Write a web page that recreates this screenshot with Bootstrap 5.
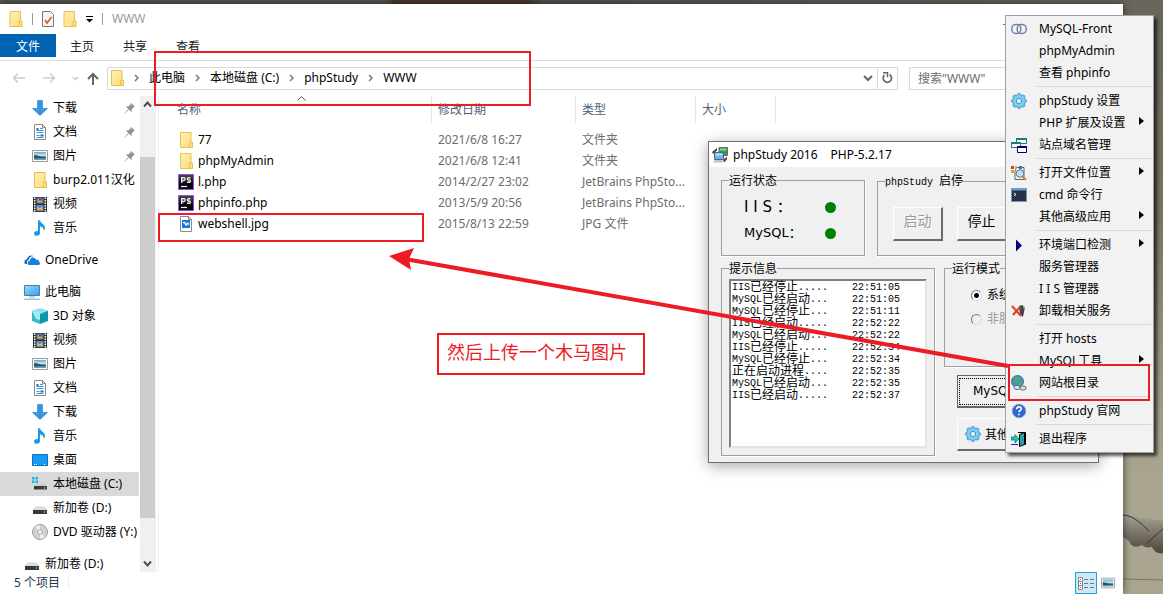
<!DOCTYPE html>
<html lang="zh-CN">
<head>
<meta charset="utf-8">
<meta name="viewport" content="width=device-width, initial-scale=1">
<title>WWW</title>
<link href="https://cdn.jsdelivr.net/npm/bootstrap@5.3.0/dist/css/bootstrap.min.css" rel="stylesheet">
<style>
  :root { --mark: #ed1c24; --ui: "Noto Sans", "Noto Sans CJK SC", sans-serif; }
  body { font: 12px/16px var(--ui); color: #000; background: #6b6a60; }
  button { font: inherit; color: inherit; background: none; border: 0; padding: 0; }
  a { color: inherit; text-decoration: none; }
  svg { display: block; flex: none; }
  .desktop { padding: 4px 40px 0 0; background: #545850; }
  .wallpaper { top: 0; right: 0; width: 40px; height: 100%; }
  .topstrip { top: 0; left: 0; width: 100%; height: 4px; background: linear-gradient(90deg, #565952 0 33%, #4b3a30 34% 45%, #54574f 47%, #6b6a60); }

  /* explorer */
  .explorer { background: #fff; box-shadow: 0 0 8px rgba(0,0,0,.6); }
  .titlebar, .ribbon, .addressrow, .statusbar { flex: none; }
  .titlebar { height: 30px; color: #999; padding-left: 9px; gap: 9px; }
  .vline { width: 1px; height: 12px; background: #999; }
  .winbtns { gap: 35px; padding: 10px 17px 0 0; }
  .ribbon { height: 27px; border-bottom: 1px solid #dadbdc; color: #222; gap: 29px; }
  .ribbon button { height: 23px; padding-top: 2px; }
  .ribbon .file-tab { width: 56px; background: #0063b1; color: #fff; margin-right: -15px; }
  .addressrow { height: 34px; padding: 0 6px 0 12px; margin-bottom: 1px; }
  .pathbox, .searchbox { height: 23px; border: 1px solid #d9d9d9; }
  .crumbs { gap: 10px; padding-left: 3px; }
  .refresh { width: 20px; height: 21px; border-left: 1px solid #d9d9d9; }
  .searchbox { width: 208px; color: #6d6d6d; padding: 0 8px; font: inherit; border-radius: 0; margin-left: 11px; }
  .searchbox::placeholder { color: #6d6d6d; opacity: 1; }
  .side { width: 140px; }
  .side a { height: 24px; padding-left: 32px; gap: 5px; white-space: nowrap; flex: none; margin-right: 1px; overflow: hidden; }
  .side a.top-level { padding-left: 24px; }
  .side a.spaced { margin-top: 8px; }
  .side a.current { background: #d9d9d9; }
  .side .pin { margin-left: auto; margin-right: 3px; }
  .side .pinned-name { width: 84px; overflow: hidden; }
  .scroller { width: 16px; background: #f0f0f0; }
  .scroller button { height: 17px; width: 14px; }
  .thumb { width: 15px; margin: 44px 0 37px; background: #cdcdcd; flex: 1; }
  .files { border-left: 1px solid #f0f0f0; margin-left: 2px; }
  .filelist { table-layout: fixed; width: 617px; color: #6d6d6d; border-collapse: separate; border-spacing: 0; }
  .filelist th { height: 27px; border-right: 1px solid #e5e5e5; font-weight: 400; color: #4c607a; padding: 0 6px; }
  .filelist td { height: 21px; padding: 0 6px; white-space: nowrap; }
  .filelist th:first-child, .filelist td:first-child { padding-left: 18px; }
  .filelist td:first-child { padding-left: 19px; }
  .filelist tbody::before { content: ""; display: block; height: 6px; }
  .filelist .fname { color: #000; gap: 4px; }
  .sortmark { top: -4px; left: 138px; }
  .statusbar { height: 22px; color: #26354f; padding: 0 8px 0 14px; }
  .viewbtn { width: 22px; height: 22px; }
  .viewbtn.on { border: 1px solid #26a0da; background: #cbe8f6; }

  /* phpStudy window */
  .study { left: 708px; top: 141px; width: 391px; height: 322px; background: #f0f0f0; border: 1px solid #707070; box-shadow: 0 3px 14px rgba(0,0,0,.35); }
  .study-title { height: 25px; background: #fff; padding-left: 3px; gap: 5px; }
  .study-body { padding: 7px 12px 6px; gap: 6px; }
  .group { border: 1px solid #a0a0a0; box-shadow: 1px 0 #fff, 0 1px #fff; padding: 0 7px; }
  .group legend { float: none; width: auto; font: 12px/12px "Noto Sans CJK SC", sans-serif; margin: 0; background: #f0f0f0; }
  .group .song { font-family: "Liberation Mono", "Noto Sans CJK SC", monospace; font-size: 10px; }
  .g-status { width: 144px; height: 82px; }
  .g-info { width: 214px; height: 194px; }
  .g-mode { height: 105px; }
  .state { font: 13px/26px "DejaVu Sans", "Noto Sans CJK SC", sans-serif; padding: 0 21px 0 15px; }
  .state .wide { font-size: 15px; word-break: keep-all; }
  .lamp { width: 11px; height: 11px; border-radius: 50%; background: #008000; }
  .raised { background: #f0f0f0; border: solid; border-width: 1px 2px 2px 1px; border-color: #fff #6a6a6a #6a6a6a #fff; white-space: nowrap; font-family: "Noto Sans CJK SC", sans-serif; }
  .sq { width: 50px; height: 34px; font-size: 14px; padding-bottom: 8px; }
  .sq:disabled { color: #9a9a9a; text-shadow: 1px 1px #fff; }
  .long { height: 33px; width: 128px; margin-left: 13px; }
  .long.focused { border: 1px solid #646464; border-right-width: 2px; border-bottom-width: 2px; padding-left: 2px; font-family: "DejaVu Sans", "Noto Sans CJK SC", sans-serif; }
  .focused span { display: block; outline: 1px dotted #000; height: 25px; line-height: 25px; padding-left: 13px; margin-right: 3px; text-align: left; }
  .log { height: 169px; background: #fff; border: 2px solid; border-color: #808080 #e3e3e3 #e3e3e3 #808080; margin: 5px 0 0; padding: 1px 0 0 1px; list-style: none; white-space: pre; font: 10px/12px "Liberation Mono", "Noto Sans CJK SC", monospace; }
  .log li { height: 12px; }
  .log span { font-size: 12px; line-height: 12px; vertical-align: top; }
  .mode { gap: 5px; height: 24px; padding-left: 19px; white-space: nowrap; }
  .mode input { appearance: none; width: 11px; height: 11px; margin: 0; border-radius: 50%; border: 1px solid #777; border-right-color: #ddd; border-bottom-color: #ddd; background: #fff; }
  .mode input:checked { background: radial-gradient(circle, #000 0 2px, #fff 3px); }
  .mode.off { color: #9a9a9a; }
  .mode.off input { background: #f0f0f0; }

  /* tray menu */
  .traymenu { left: 1005px; top: 15px; width: 149px; background: #f2f2f2; border: 1px solid #a0a0a0; padding: 2px; margin: 0; list-style: none; box-shadow: 3px 3px 3px rgba(0,0,0,.65); white-space: nowrap; }
  .traymenu button { height: 22px; width: 100%; gap: 12px; text-align: left; }
  .traymenu .slot { width: 16px; margin-left: 3px; flex: none; }
  .traymenu .more { margin: 0 7px 4px auto; width: 5px; height: 8px; background: #000; clip-path: polygon(0 0, 100% 50%, 0 100%); }
  .traymenu .rule { height: 4px; margin: 2px 0 0 29px; border-top: 1px solid #d7d7d7; }

  /* annotations */
  .markbox { border: 2px solid var(--mark); pointer-events: none; }
  .m-path { left: 154px; top: 51px; width: 377px; height: 55px; }
  .m-file { left: 158px; top: 213px; width: 266px; height: 29px; }
  .m-note { left: 437px; top: 333px; width: 208px; height: 42px; color: var(--mark); font: 18px/34px var(--ui); padding-left: 8px; }
  .m-root { left: 1008px; top: 364px; width: 142px; height: 37px; }
  .m-arrow { left: 380px; top: 240px; pointer-events: none; }
</style>
</head>
<body>
<svg width="0" height="0" class="position-absolute" aria-hidden="true">
  <defs>
    <linearGradient id="gf" x2="1" y2="1"><stop stop-color="#fff0b5"/><stop offset="1" stop-color="#ffdc7a"/></linearGradient>
    <linearGradient id="gs" x2="0" y2="1"><stop stop-color="#5fa9dc"/><stop offset=".45" stop-color="#cfe6f2"/><stop offset=".6" stop-color="#39738a"/><stop offset="1" stop-color="#7ba5c4"/></linearGradient>
    <linearGradient id="gm" x2="1" y2="1"><stop stop-color="#9bdcff"/><stop offset="1" stop-color="#2a9df4"/></linearGradient>
    <linearGradient id="gp" x2="0" y2="1"><stop stop-color="#4a4a4a"/><stop offset=".6" stop-color="#080808"/></linearGradient>
    <symbol id="folder" viewBox="0 0 16 16"><path d="M2.500.5h10.500v9.500h1.500v5.500H2.500z" fill="url(#gf)" stroke="#e6c24a"/><path d="M11.500 15v-4.500h1.500v-1" fill="none" stroke="#e6c24a"/></symbol>
    <symbol id="down" viewBox="0 0 16 16"><path d="M5.500.5h5v8h5L8 15.500.500 8.500h5z" fill="#3a94e4" stroke="#2b79c5" stroke-width=".6"/></symbol>
    <symbol id="doc" viewBox="0 0 16 16"><path d="M2.500.5h8l3 3v12h-11z" fill="#fff" stroke="#8a8a8a"/><path d="M10.500.5v3h3" fill="none" stroke="#8a8a8a"/><path d="M8 4.500h3M4.500 6.500h7M4.500 8.500h7M4.500 11.500h3M4.500 13.500h7" stroke="#2f9be0"/><path d="M4.500 5h2M8.500 11.500h3" stroke="#34689b" stroke-width="2"/></symbol>
    <symbol id="pic" viewBox="0 0 16 16"><path d="M.5 2.500h15v11H.5z" fill="#fff" stroke="#9a9a9a"/><path d="M2 4h12v8H2z" fill="url(#gs)"/><path d="M2 7c4 0 7 2 9 2l3 .5V10L2 10.500z" fill="#2a5d55"/></symbol>
    <symbol id="film" viewBox="0 0 16 16"><path d="M1 1h14v15H1z" fill="#333"/><path d="M4.500 1.500h7v6h-7z" fill="#3b76c9"/><path d="M4.500 9h7v6h-7z" fill="#4b8fe0"/><path d="M6 3l3 1 2 2-3 1-3-1z" fill="#e2a52a"/><path d="M7 2.500h2v2H7z" fill="#cf3030"/><path d="M5 10l2 2 3-1 1 3H5z" fill="#e6b64b"/><path d="M2.700 1.500v14M13.300 1.500v14" stroke="#fff" stroke-width="1.400" stroke-dasharray="1.500 1"/></symbol>
    <symbol id="note" viewBox="0 0 16 16"><path d="M6 .3h2c.3 2.900 5 4.200 5 7.400 0 1.300-.6 2.300-1.200 2.900.2-2-1.300-3.700-3.800-4.400V13c0 1.700-1.400 2.800-3.200 2.800S2 14.900 2 13.500 3.300 11 4.800 11c.5 0 .9 0 1.200.2z" fill="#1a9be6"/></symbol>
    <symbol id="pin" viewBox="0 0 12 12"><path d="M7 .8L11 5l-1.200.2-2 2.200-.3 2.600L5 7.500 1 11.200.6 11 4.300 7 1.800 4.500l2.700-.3 2.200-2z" fill="#8895a3"/></symbol>
    <symbol id="cloud" viewBox="0 0 16 16"><path d="M1 12C-.5 9.500 1 7.500 3 7.300 3.500 4.500 6.500 2.500 10 4.300c-3-.5-5 1.500-5.200 3.500C3 8.500 2.500 10.500 3.200 12z" fill="#0f6cc4"/><path d="M4.500 13c-1.500-1-1-4 1.300-4.200C6 5.500 10 4 12.200 7.800 14.500 7.500 15.500 9 15 10c1.500.5 1.300 3-.3 3z" fill="#1580dd"/></symbol>
    <symbol id="pc" viewBox="0 0 16 16"><path d="M.5 1.500h15v10H.5z" fill="url(#gm)" stroke="#4b7f9e"/><path d="M5 13h6" stroke="#8ca9b5"/><path d="M0 15.200h16" stroke="#76a5c4"/></symbol>
    <symbol id="cube" viewBox="0 0 16 16"><path d="M8 0l8 2.800L8 6 0 2.800z" fill="#8ce5ec"/><path d="M0 2.800L8 6v10l-8-3z" fill="#32bccb"/><path d="M16 2.800L8 6v10l8-3z" fill="#0b98ab"/><path d="M0 2.800L8 4v8l-4-1z" fill="#a5ecf1"/></symbol>
    <symbol id="desk" viewBox="0 0 16 16"><path d="M.5 2.500h15v11H.5z" fill="#1a9bf5" stroke="#0e6fb8"/><path d="M2 12.500h12" stroke="#fff" stroke-dasharray="1 1 1 7"/></symbol>
    <symbol id="disk" viewBox="0 0 16 16"><path d="M3.500 6.500h9L15 10H1z" fill="#dcdcdc"/><path d="M1 10h14v4H1z" fill="#3a3a3a"/><path d="M11.500 12h2" stroke="#7fe07f"/></symbol>
    <symbol id="sysdisk" viewBox="0 0 16 16"><path d="M0 1h2.500v2.500H0zM3.500 1H6v2.500H3.500zM0 4.500h2.500V7H0zM3.500 4.500H6V7H3.500z" fill="#19b4f0"/><path d="M4.500 7h8L15 10H2z" fill="#cfcfcf"/><path d="M2 10h13v3.500H2z" fill="#3a3a3a"/><path d="M11.500 12h2" stroke="#7fe07f"/></symbol>
    <symbol id="dvd" viewBox="0 0 16 16"><circle cx="8" cy="8" r="7.500" fill="#cfd1d2" stroke="#9c9c9c"/><path d="M8 8L3 2.500 8 1zM8 8l5 5.500L8 15z" fill="#eee"/><circle cx="8" cy="8" r="2.300" fill="#f6f6f6" stroke="#aaa"/></symbol>
    <symbol id="ps" viewBox="0 0 16 16"><path d="M.5.5h15v15H.5z" fill="url(#gp)" stroke="#9450e8"/><path d="M3.700 9V3.700H6c1.500 0 1.500 2.800 0 2.800H4M12.500 3.700h-2c-1.500 0-1.500 2.300 0 2.300h.7c1.500 0 1.500 2.300 0 2.300H9" fill="none" stroke="#e6e6e6" stroke-width="1.400"/><path d="M3 12.500h6" stroke="#fff" stroke-width="1.200"/></symbol>
    <symbol id="jpg" viewBox="0 0 16 16"><path d="M2.500.5h8l3 3v12h-11z" fill="#fff" stroke="#8a8a8a"/><path d="M10.500.5v3h3" fill="none" stroke="#8a8a8a"/><path d="M4 4h8v8H4z" fill="#0f7ad8"/><path d="M5 6.500h1.500L8 9l1.500-2L11 8.500" fill="none" stroke="#fff" stroke-width="1.300"/></symbol>
    <symbol id="chev" viewBox="0 0 5 8"><path d="M1 1l3 3-3 3" fill="none" stroke="#777" stroke-width="1.500"/></symbol>
    <symbol id="gear" viewBox="0 0 16 16"><g fill="#6fc4f0" stroke="#3593cd" stroke-width=".8"><circle cx="8" cy="2.500" r="2"/><circle cx="12" cy="4" r="2"/><circle cx="13.500" cy="8" r="2"/><circle cx="12" cy="12" r="2"/><circle cx="8" cy="13.500" r="2"/><circle cx="4" cy="12" r="2"/><circle cx="2.500" cy="8" r="2"/><circle cx="4" cy="4" r="2"/></g><circle cx="8" cy="8" r="5.500" fill="#7fcdf5"/><circle cx="8" cy="8" r="2.600" fill="#f4f9fc" stroke="#3b94ca"/></symbol>
  </defs>
</svg>

<main class="desktop vh-100 position-relative overflow-hidden d-flex flex-column">
  <div class="topstrip position-absolute"></div>
  <svg class="wallpaper position-absolute" viewBox="0 0 40 594" preserveAspectRatio="none" aria-hidden="true">
    <defs><linearGradient id="wp" x2="0" y2="1"><stop stop-color="#68665c"/><stop offset=".35" stop-color="#76725f"/><stop offset=".55" stop-color="#908c78"/><stop offset=".8" stop-color="#a9a590"/><stop offset="1" stop-color="#aaa590"/></linearGradient>
    <linearGradient id="br" x2="0" y2="1"><stop stop-color="#aaa69a"/><stop offset="1" stop-color="#4d4438"/></linearGradient></defs>
    <path d="M0 0h40v594H0z" fill="url(#wp)"/>
    <path d="M0 513l20 5 20 3v32c-6 1-9-2-11-6-5 1-8 0-10-2-7 4-12 0-13-4l-6-4z" fill="url(#br)"/>
    <path d="M0 515c10 0 20 10 26 16M24 543l16-14" stroke="#38332b" fill="none"/>
    <path d="M0 579l40 1" stroke="#7c7868"/>
  </svg>

  <section class="explorer position-relative flex-grow-1 d-flex flex-column" style="min-height:0">
    <header class="titlebar d-flex align-items-center">
      <svg width="14" height="16" viewBox="2 0 13 16"><use href="#folder" width="16" height="16"/></svg>
      <span class="vline"></span>
      <svg width="12" height="16" viewBox="0 0 12 16"><path d="M.5.5h8l3 3v12H.5z" fill="#f6f6f6" stroke="#777"/><path d="M3 9l2 3 4.500-6" fill="none" stroke="#e2571e" stroke-width="1.600"/></svg>
      <svg width="14" height="16" viewBox="2 0 13 16"><use href="#folder" width="16" height="16"/></svg>
      <svg width="7" height="7" viewBox="0 0 7 7"><path d="M0 .5h7" stroke="#000"/><path d="M0 3h7L3.500 6.500z"/></svg>
      <span class="vline"></span>
      <span>WWW</span>
      <div class="winbtns ms-auto d-flex">
        <button aria-label="最小化"><svg width="11" height="11"><path d="M0 5.500h11" stroke="#777"/></svg></button>
        <button aria-label="最大化"><svg width="11" height="11"><path d="M.5.500h10v10H.500z" fill="none" stroke="#777"/></svg></button>
        <button aria-label="关闭"><svg width="11" height="11"><path d="M.5.500l10 10M10.500.500l-10 10" stroke="#777"/></svg></button>
      </div>
    </header>
    <nav class="ribbon d-flex">
      <button class="file-tab">文件</button><button>主页</button><button>共享</button><button>查看</button>
    </nav>
    <div class="addressrow d-flex align-items-center">
      <button aria-label="后退"><svg width="14" height="12" viewBox="0 0 14 12"><path d="M13 6H2M6 1.500L1.500 6 6 10.500" fill="none" stroke="#ccc" stroke-width="1.500"/></svg></button>
      <button class="ms-3" aria-label="前进"><svg width="14" height="12" viewBox="0 0 14 12"><path d="M1 6h11M8 1.500L12.500 6 8 10.500" fill="none" stroke="#ccc" stroke-width="1.500"/></svg></button>
      <button class="ms-3 me-2" aria-label="最近"><svg width="7" height="5"><path d="M1 1l2.500 2.500L6 1" fill="none" stroke="#ccc" stroke-width="1.500"/></svg></button>
      <button class="me-2" aria-label="上移"><svg width="12" height="13"><path d="M6 13V2M1 7l5-5 5 5" fill="none" stroke="#666" stroke-width="2"/></svg></button>
      <div class="pathbox flex-grow-1 d-flex align-items-center">
        <nav class="crumbs flex-grow-1 d-flex align-items-center">
          <svg width="13" height="16" viewBox="2 0 13 16"><use href="#folder" width="16" height="16"/></svg>
          <svg width="5" height="8"><use href="#chev"/></svg><a href="#">此电脑</a>
          <svg width="5" height="8"><use href="#chev"/></svg><a href="#">本地磁盘 (C:)</a>
          <svg width="5" height="8"><use href="#chev"/></svg><a href="#">phpStudy</a>
          <svg width="5" height="8"><use href="#chev"/></svg><a href="#">WWW</a>
        </nav>
        <button class="me-1" aria-label="历史记录"><svg width="10" height="7"><path d="M1 1l4 4 4-4" fill="none" stroke="#666" stroke-width="2"/></svg></button>
        <button class="refresh d-flex align-items-center justify-content-center" aria-label="刷新"><svg width="11" height="12" viewBox="0 0 11 12"><path d="M7.500 2.500A4.200 4.200 0 1 1 2.500 3" fill="none" stroke="#666" stroke-width="1.700"/><path d="M1 .8h4.500v4.500" fill="none" stroke="#666" stroke-width="1.500"/></svg></button>
      </div>
      <input class="searchbox" type="search" placeholder='搜索"WWW"' aria-label="搜索">
    </div>
    <div class="d-flex flex-grow-1" style="min-height:0">
      <nav class="side d-flex flex-column overflow-hidden flex-shrink-0">
        <a href="#" class="d-flex align-items-center"><svg width="16" height="16"><use href="#down"/></svg>下载<svg class="pin" width="12" height="12"><use href="#pin"/></svg></a>
        <a href="#" class="d-flex align-items-center"><svg width="16" height="16"><use href="#doc"/></svg>文档<svg class="pin" width="12" height="12"><use href="#pin"/></svg></a>
        <a href="#" class="d-flex align-items-center"><svg width="16" height="16"><use href="#pic"/></svg>图片<svg class="pin" width="12" height="12"><use href="#pin"/></svg></a>
        <a href="#" class="d-flex align-items-center"><svg width="16" height="16"><use href="#folder"/></svg><span class="pinned-name">burp2.011汉化</span></a>
        <a href="#" class="d-flex align-items-center"><svg width="16" height="16"><use href="#film"/></svg>视频</a>
        <a href="#" class="d-flex align-items-center"><svg width="16" height="16"><use href="#note"/></svg>音乐</a>
        <a href="#" class="d-flex align-items-center top-level spaced"><svg width="16" height="16"><use href="#cloud"/></svg>OneDrive</a>
        <a href="#" class="d-flex align-items-center top-level spaced"><svg width="16" height="16"><use href="#pc"/></svg>此电脑</a>
        <a href="#" class="d-flex align-items-center"><svg width="16" height="16"><use href="#cube"/></svg>3D 对象</a>
        <a href="#" class="d-flex align-items-center"><svg width="16" height="16"><use href="#film"/></svg>视频</a>
        <a href="#" class="d-flex align-items-center"><svg width="16" height="16"><use href="#pic"/></svg>图片</a>
        <a href="#" class="d-flex align-items-center"><svg width="16" height="16"><use href="#doc"/></svg>文档</a>
        <a href="#" class="d-flex align-items-center"><svg width="16" height="16"><use href="#down"/></svg>下载</a>
        <a href="#" class="d-flex align-items-center"><svg width="16" height="16"><use href="#note"/></svg>音乐</a>
        <a href="#" class="d-flex align-items-center"><svg width="16" height="16"><use href="#desk"/></svg>桌面</a>
        <a href="#" class="d-flex align-items-center current"><svg width="16" height="16"><use href="#sysdisk"/></svg>本地磁盘 (C:)</a>
        <a href="#" class="d-flex align-items-center"><svg width="16" height="16"><use href="#disk"/></svg>新加卷 (D:)</a>
        <a href="#" class="d-flex align-items-center"><svg width="16" height="16"><use href="#dvd"/></svg>DVD 驱动器 (Y:)</a>
        <a href="#" class="d-flex align-items-center top-level spaced"><svg width="16" height="16"><use href="#disk"/></svg>新加卷 (D:)</a>
      </nav>
      <div class="scroller d-flex flex-column flex-shrink-0">
        <button class="d-flex align-items-center justify-content-center" aria-label="向上滚动"><svg width="9" height="7"><path d="M1 5.500l3.500-4 3.500 4" fill="none" stroke="#505050" stroke-width="2"/></svg></button>
        <div class="thumb"></div>
        <button class="d-flex align-items-center justify-content-center" aria-label="向下滚动"><svg width="9" height="7"><path d="M1 1.500l3.500 4 3.500-4" fill="none" stroke="#505050" stroke-width="2"/></svg></button>
      </div>
      <div class="files flex-grow-1 position-relative">
        <svg class="sortmark position-absolute mt-1" width="9" height="5"><path d="M.5 4.500l4-4 4 4" fill="none" stroke="#555"/></svg>
        <table class="filelist">
          <colgroup><col style="width:273px"><col style="width:144px"><col style="width:120px"><col style="width:80px"></colgroup>
          <thead><tr><th>名称</th><th>修改日期</th><th>类型</th><th>大小</th></tr></thead>
          <tbody>
            <tr><td><div class="fname d-flex align-items-center"><svg width="16" height="16"><use href="#folder"/></svg>77</div></td><td>2021/6/8 16:27</td><td>文件夹</td><td></td></tr>
            <tr><td><div class="fname d-flex align-items-center"><svg width="16" height="16"><use href="#folder"/></svg>phpMyAdmin</div></td><td>2021/6/8 12:41</td><td>文件夹</td><td></td></tr>
            <tr><td><div class="fname d-flex align-items-center"><svg width="16" height="16"><use href="#ps"/></svg>l.php</div></td><td>2014/2/27 23:02</td><td>JetBrains PhpSto...</td><td></td></tr>
            <tr><td><div class="fname d-flex align-items-center"><svg width="16" height="16"><use href="#ps"/></svg>phpinfo.php</div></td><td>2013/5/9 20:56</td><td>JetBrains PhpSto...</td><td></td></tr>
            <tr><td><div class="fname d-flex align-items-center"><svg width="16" height="16"><use href="#jpg"/></svg>webshell.jpg</div></td><td>2015/8/13 22:59</td><td>JPG 文件</td><td></td></tr>
          </tbody>
        </table>
      </div>
    </div>
    <footer class="statusbar d-flex align-items-center">
      <span>5 个项目</span><span class="vline ms-2" style="opacity:.2"></span>
      <button class="viewbtn on ms-auto d-flex align-items-center justify-content-center" aria-label="详细信息"><svg width="16" height="13"><path d="M.5.500h4v12h-4zM.5 4.500h4M.5 8.500h4" fill="#fff" stroke="#888"/><path d="M6 2.500h4M12 2.500h4M6 6.500h4M12 6.500h4M6 10.500h4M12 10.500h4" stroke="#777"/><path d="M2 2.500h1M2 10.500h1" stroke="#c33"/><path d="M2 6.500h1" stroke="#36c"/></svg></button>
      <button class="viewbtn d-flex align-items-center justify-content-center" style="margin-right:-4px" aria-label="大图标"><svg width="14" height="14"><use href="#pic"/></svg></button>
    </footer>
  </section>

  <section class="study position-absolute d-flex flex-column">
    <header class="study-title d-flex align-items-center flex-shrink-0"><svg width="16" height="16" viewBox="0 0 16 16"><path d="M7 .5h8.500v8H7z" fill="#2d9a55" stroke="#667"/><path d="M8 1.500h6.500v2H8z" fill="#8fd08f"/><path d="M2.500 5.500h9v7h-9z" fill="#6fb0e8" stroke="#466a8a"/><path d="M3.500 6.500h7v2h-7z" fill="#b8dcf7"/><path d="M1 15.500l2-2.500h7l1 2.500z" fill="#b8c4cc"/><path d="M0 5l5-4v2.500L1 7z" fill="#444"/><path d="M15 9.500l-4 3.500 1 2.500 3-3z" fill="#a02525"/></svg><span>phpStudy 2016</span><span class="ms-2">PHP-5.2.17</span></header>
    <div class="study-body d-flex flex-column flex-grow-1">
      <div class="d-flex">
        <fieldset class="group g-status flex-shrink-0"><legend>运行状态</legend>
          <div class="state mt-2 d-flex align-items-center justify-content-between"><span class="wide">I I S ：</span><span class="lamp"></span></div>
          <div class="state d-flex align-items-center justify-content-between"><span>MySQL：</span><span class="lamp"></span></div>
        </fieldset>
        <fieldset class="group flex-grow-1" style="margin-left:12px"><legend><span class="song">phpStudy </span>启停</legend>
          <div class="d-flex" style="padding:18px 0 0 8px;gap:14px"><button class="raised sq" disabled>启动</button><button class="raised sq">停止</button></div>
        </fieldset>
      </div>
      <div class="d-flex">
        <fieldset class="group g-info flex-shrink-0"><legend>提示信息</legend>
          <ul class="log"><li>IIS<span>已经停止</span>.....    22:51:05</li><li>MySQL<span>已经启动</span>...    22:51:05</li><li>MySQL<span>已经停止</span>...    22:51:11</li><li>IIS<span>已经启动</span>.....    22:52:22</li><li>MySQL<span>已经启动</span>...    22:52:22</li><li>IIS<span>已经停止</span>.....    22:52:34</li><li>MySQL<span>已经停止</span>...    22:52:34</li><li><span>正在启动进程</span>....    22:52:35</li><li>MySQL<span>已经启动</span>...    22:52:35</li><li>IIS<span>已经启动</span>.....    22:52:37</li></ul>
        </fieldset>
        <div class="flex-grow-1" style="margin-left:9px">
          <fieldset class="group g-mode"><legend>运行模式</legend>
            <label class="mode d-flex align-items-center" style="margin-top:9px"><input type="radio" name="mode" checked>系统服务</label>
            <label class="mode off d-flex align-items-center"><input type="radio" name="mode" disabled>非服务模式</label>
          </fieldset>
          <button class="raised long focused d-block" style="margin-top:8px"><span>MySQL管理器</span></button>
          <button class="raised long d-flex align-items-center" style="margin-top:10px;gap:4px;padding-left:7px"><svg width="16" height="16"><use href="#gear"/></svg>其他菜单</button>
        </div>
      </div>
    </div>
  </section>

  <ul class="traymenu position-absolute">
    <li><button class="d-flex align-items-center"><span class="slot"><svg width="16" height="16" viewBox="0 0 16 16"><rect x=".8" y="3.500" width="9" height="9" rx="4" fill="none" stroke="#6f7fa8" stroke-width="1.500"/><rect x="6.200" y="3.500" width="9" height="9" rx="4" fill="none" stroke="#6f7fa8" stroke-width="1.500"/></svg></span>MySQL-Front</button></li>
    <li><button class="d-flex align-items-center"><span class="slot"></span>phpMyAdmin</button></li>
    <li><button class="d-flex align-items-center"><span class="slot"></span>查看 phpinfo</button></li>
    <li class="rule"></li>
    <li><button class="d-flex align-items-center"><span class="slot"><svg width="16" height="16"><use href="#gear"/></svg></span>phpStudy 设置</button></li>
    <li><button class="d-flex align-items-center"><span class="slot"></span>PHP 扩展及设置<span class="more"></span></button></li>
    <li><button class="d-flex align-items-center"><span class="slot"><svg width="16" height="16" viewBox="0 0 16 16"><path d="M5.500 1.500h10v5h-10zM.5 5.500h9v5h-9z" fill="#fff" stroke="#1d7d7d"/><path d="M5 2h11M0 6h10" stroke="#1d7d7d" stroke-width="2"/><path d="M6.500 9.500h9v6h-9z" fill="#fff" stroke="#000080"/><path d="M6 10h10" stroke="#000080" stroke-width="2"/></svg></span>站点域名管理</button></li>
    <li class="rule"></li>
    <li><button class="d-flex align-items-center"><span class="slot"><svg width="16" height="16" viewBox="0 0 16 16"><path d="M6 2.500h7v12H4v-9z" fill="#f4f4f4" stroke="#666"/><path d="M0 1h3v3H0z" fill="#d33a2c"/><path d="M4 1h2v3H4z" fill="#e9a421"/><path d="M8 1h3v3H8z" fill="#3776c5"/><path d="M0 5h3v3H0z" fill="#e9a421"/><circle cx="9" cy="8.500" r="3.800" fill="#bfe0f7" stroke="#58788f"/><path d="M11.500 11.500l3.500 3.500" stroke="#c98f2c" stroke-width="2.200"/></svg></span>打开文件位置<span class="more"></span></button></li>
    <li><button class="d-flex align-items-center"><span class="slot"><svg width="16" height="16" viewBox="0 0 16 16"><path d="M.5 1.500h15v13H.5z" fill="#283347" stroke="#7b96b5"/><path d="M1 2.500h14" stroke="#6d9bd4" stroke-width="2"/><path d="M3 6l2 1.500L3 9" fill="none" stroke="#fff"/></svg></span>cmd 命令行</button></li>
    <li><button class="d-flex align-items-center"><span class="slot"></span>其他高级应用<span class="more"></span></button></li>
    <li class="rule"></li>
    <li><button class="d-flex align-items-center"><span class="slot"><svg width="16" height="16" viewBox="0 0 16 16"><path d="M5 2.500l6 6-6 6z" fill="#00007f"/></svg></span>环境端口检测<span class="more"></span></button></li>
    <li><button class="d-flex align-items-center"><span class="slot"></span>服务管理器</button></li>
    <li><button class="d-flex align-items-center"><span class="slot"></span>I I S 管理器</button></li>
    <li><button class="d-flex align-items-center"><span class="slot"><svg width="16" height="16" viewBox="0 0 16 16"><path d="M8 3l3-1 3 2-1 5-1 5-3-3z" fill="#444"/><path d="M12 3l2 1-1 2z" fill="#ddd"/><path d="M1 3l9 10M9 4L2 12" stroke="#e2452b" stroke-width="2.200"/></svg></span>卸载相关服务</button></li>
    <li class="rule"></li>
    <li><button class="d-flex align-items-center"><span class="slot"></span>打开 hosts</button></li>
    <li><button class="d-flex align-items-center"><span class="slot"></span>MySQL工具<span class="more"></span></button></li>
    <li><button class="d-flex align-items-center"><span class="slot"><svg width="16" height="16" viewBox="0 0 16 16"><circle cx="6.500" cy="6.500" r="6" fill="#4a8fd6" stroke="#3a6fa0"/><path d="M2 3l4-2 3 2-2 3-3 1zM7 7l4-1 1 3-3 3z" fill="#4caf50"/><rect x="3" y="10.500" width="6" height="4" rx="2" fill="#ddd" stroke="#5e6f80"/><rect x="9" y="11" width="6" height="4" rx="2" fill="#ddd" stroke="#5e6f80"/></svg></span>网站根目录</button></li>
    <li class="rule"></li>
    <li><button class="d-flex align-items-center"><span class="slot"><svg width="16" height="16" viewBox="0 0 16 16"><circle cx="8" cy="8" r="6.800" fill="#2f66d0" stroke="#88a5dd"/><path d="M5.700 6.200C5.700 3 10.500 3.300 10.300 6 10.200 7.500 8 7.600 8 9.300M8 10.700v1.500" fill="none" stroke="#fff" stroke-width="1.700"/></svg></span>phpStudy 官网</button></li>
    <li class="rule"></li>
    <li><button class="d-flex align-items-center"><span class="slot"><svg width="16" height="16" viewBox="0 0 16 16"><path d="M7 1.500h7.500v12H8" fill="#fff" stroke="#000"/><path d="M8.500 3.500l5-2v12l-5 2z" fill="#2aa3a3" stroke="#000"/><path d="M0 6h4V3.500L8 8l-4 4V9H0z" fill="#18c5c5" stroke="#075" stroke-width=".7"/><path d="M0 13.500h7" stroke="#22c"/></svg></span>退出程序</button></li>
  </ul>

  <div class="markbox m-path position-absolute"></div>
  <div class="markbox m-file position-absolute"></div>
  <div class="markbox m-note position-absolute">然后上传一个木马图片</div>
  <div class="markbox m-root position-absolute"></div>
  <svg class="m-arrow position-absolute" width="630" height="130" viewBox="380 240 630 130" aria-hidden="true"><path d="M1008 366L405 259" stroke="#ed1c24" stroke-width="4"/><path d="M389 256l25-8-5 11 2 11z" fill="#ed1c24"/></svg>
</main>
<script src="https://cdn.jsdelivr.net/npm/bootstrap@5.3.0/dist/js/bootstrap.bundle.min.js"></script>
</body>
</html>
